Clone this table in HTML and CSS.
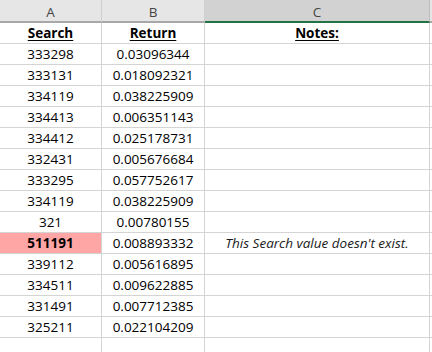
FILE: index.html
```html
<!DOCTYPE html>
<html>
<head>
<meta charset="utf-8">
<link rel="stylesheet" href="styles.css">
</head>
<body>
<div class="sheet">
  <div class="hd">A</div><div class="hd">B</div><div class="hd sel">C</div><div class="hd last"></div>

  <div class="c b"><span class="u">Search</span></div><div class="c b"><span class="u">Return</span></div><div class="c b"><span class="u">Notes:</span></div><div class="c last"></div>

  <div class="c">333298</div><div class="c">0.03096344</div><div class="c"></div><div class="c last"></div>
  <div class="c">333131</div><div class="c">0.018092321</div><div class="c"></div><div class="c last"></div>
  <div class="c">334119</div><div class="c">0.038225909</div><div class="c"></div><div class="c last"></div>
  <div class="c">334413</div><div class="c">0.006351143</div><div class="c"></div><div class="c last"></div>
  <div class="c">334412</div><div class="c">0.025178731</div><div class="c"></div><div class="c last"></div>
  <div class="c">332431</div><div class="c">0.005676684</div><div class="c"></div><div class="c last"></div>
  <div class="c">333295</div><div class="c">0.057752617</div><div class="c"></div><div class="c last"></div>
  <div class="c">334119</div><div class="c">0.038225909</div><div class="c"></div><div class="c last"></div>
  <div class="c">321</div><div class="c">0.00780155</div><div class="c"></div><div class="c last"></div>
  <div class="c b pink">511191</div><div class="c">0.008893332</div><div class="c note">This Search value doesn't exist.</div><div class="c last"></div>
  <div class="c">339112</div><div class="c">0.005616895</div><div class="c"></div><div class="c last"></div>
  <div class="c">334511</div><div class="c">0.009622885</div><div class="c"></div><div class="c last"></div>
  <div class="c">331491</div><div class="c">0.007712385</div><div class="c"></div><div class="c last"></div>
  <div class="c">325211</div><div class="c">0.022104209</div><div class="c"></div><div class="c last"></div>
  <div class="c"></div><div class="c"></div><div class="c"></div><div class="c last"></div>
</div>
</body>
</html>
```

FILE: styles.css
```css
html, body {
  margin: 0;
  padding: 0;
  background: #ffffff;
  overflow: hidden;
  height: 352px;
}

.sheet {
  display: grid;
  grid-template-columns: 102px 103px 225px 1fr;
  grid-auto-rows: 21px;
  grid-template-rows: 23px;
  font-family: "Open Sans", "Liberation Sans", sans-serif;
  font-size: 13.5px;
  color: #000000;
  width: 432px;
}

.hd {
  box-sizing: border-box;
  background: #e6e6e6;
  color: #444444;
  text-align: center;
  padding-top: 3px;
  line-height: 18px;
  border-right: 1px solid #cfcfcf;
  border-bottom: 2px solid #a8a8a8;
}

.hd.sel {
  background: #d2d2d2;
  border-bottom-color: #217346;
  border-right-color: #bdbdbd;
}

.c {
  box-sizing: border-box;
  border-right: 1px solid #d4d4d4;
  border-bottom: 1px solid #d4d4d4;
  text-align: center;
  line-height: 20px;
  white-space: nowrap;
  overflow: hidden;
}

.last {
  border-right: none;
}

.b {
  font-weight: 700;
}

.u {
  text-decoration: underline;
  text-underline-offset: 2px;
}

.pink {
  background: #fea6a5;
}

.note {
  font-style: italic;
  color: #1a1a1a;
}
```
